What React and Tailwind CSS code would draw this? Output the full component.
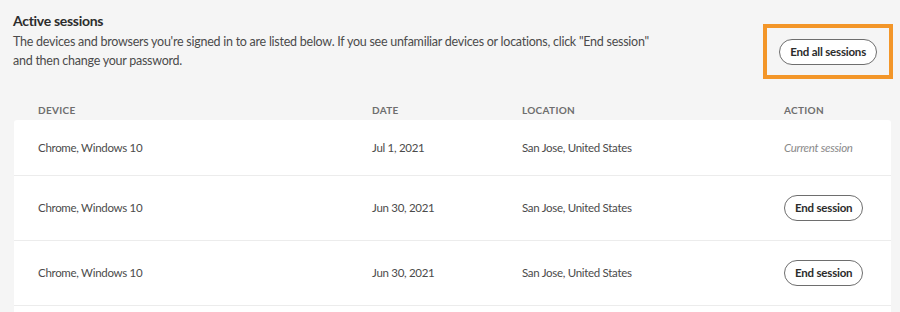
const SESSIONS = [
  { device: "Chrome, Windows 10", date: "Jul 1, 2021", location: "San Jose, United States", current: true },
  { device: "Chrome, Windows 10", date: "Jun 30, 2021", location: "San Jose, United States" },
  { device: "Chrome, Windows 10", date: "Jun 30, 2021", location: "San Jose, United States" },
];

function PillButton({ children }) {
  return (
    <button className="h-[26px] rounded-full border-[1.5px] border-[#6e6e6e] bg-white px-[10px] text-[11.5px] font-bold tracking-[-0.2px] text-[#2c2c2c]">
      {children}
    </button>
  );
}

export default function App() {
  return (
    <div className="h-screen overflow-hidden bg-[#f5f5f5] font-['Lato',sans-serif] text-[#2c2c2c]">
      <div className="flex items-start pl-[13px] pr-[7px] pt-[11px]">
        <div className="flex-1">
          <h2 className="text-[14px] font-bold leading-[20px] tracking-[-0.3px] text-[#2c2c2c]">Active sessions</h2>
          <p className="mt-[1px] w-[645px] text-[12.5px] leading-[19px] tracking-[-0.25px] text-[#4b4b4b]">
            The devices and browsers you're signed in to are listed below. If you see unfamiliar devices or locations, click "End session" and then change your password.
          </p>
        </div>
        <div className="mt-[13px] border-[4px] border-[#f39629] px-[12px] py-[10px]">
          <PillButton>End all sessions</PillButton>
        </div>
      </div>

      <div className="mt-[24px] pl-[14px] pr-[9px]">
        <div className="grid grid-cols-[334px_150px_262px_1fr] pl-[24px] text-[10px] font-bold uppercase tracking-[0.3px] text-[#6e6e6e]">
          <div>Device</div>
          <div>Date</div>
          <div>Location</div>
          <div>Action</div>
        </div>
        <div className="mt-[2px] rounded-[3px] bg-white pb-[20px]">
          {SESSIONS.map((s, i) => (
            <div
              key={i}
              className={`grid grid-cols-[334px_150px_262px_1fr] items-center border-b border-[#ececec] pl-[24px] text-[11.5px] tracking-[-0.3px] text-[#4b4b4b] ${s.current ? "h-[56px]" : "h-[65px]"}`}
            >
              <div>{s.device}</div>
              <div>{s.date}</div>
              <div>{s.location}</div>
              <div>
                {s.current ? (
                  <span className="italic text-[#8a8a8a]">Current session</span>
                ) : (
                  <PillButton>End session</PillButton>
                )}
              </div>
            </div>
          ))}
        </div>
      </div>
    </div>
  );
}
